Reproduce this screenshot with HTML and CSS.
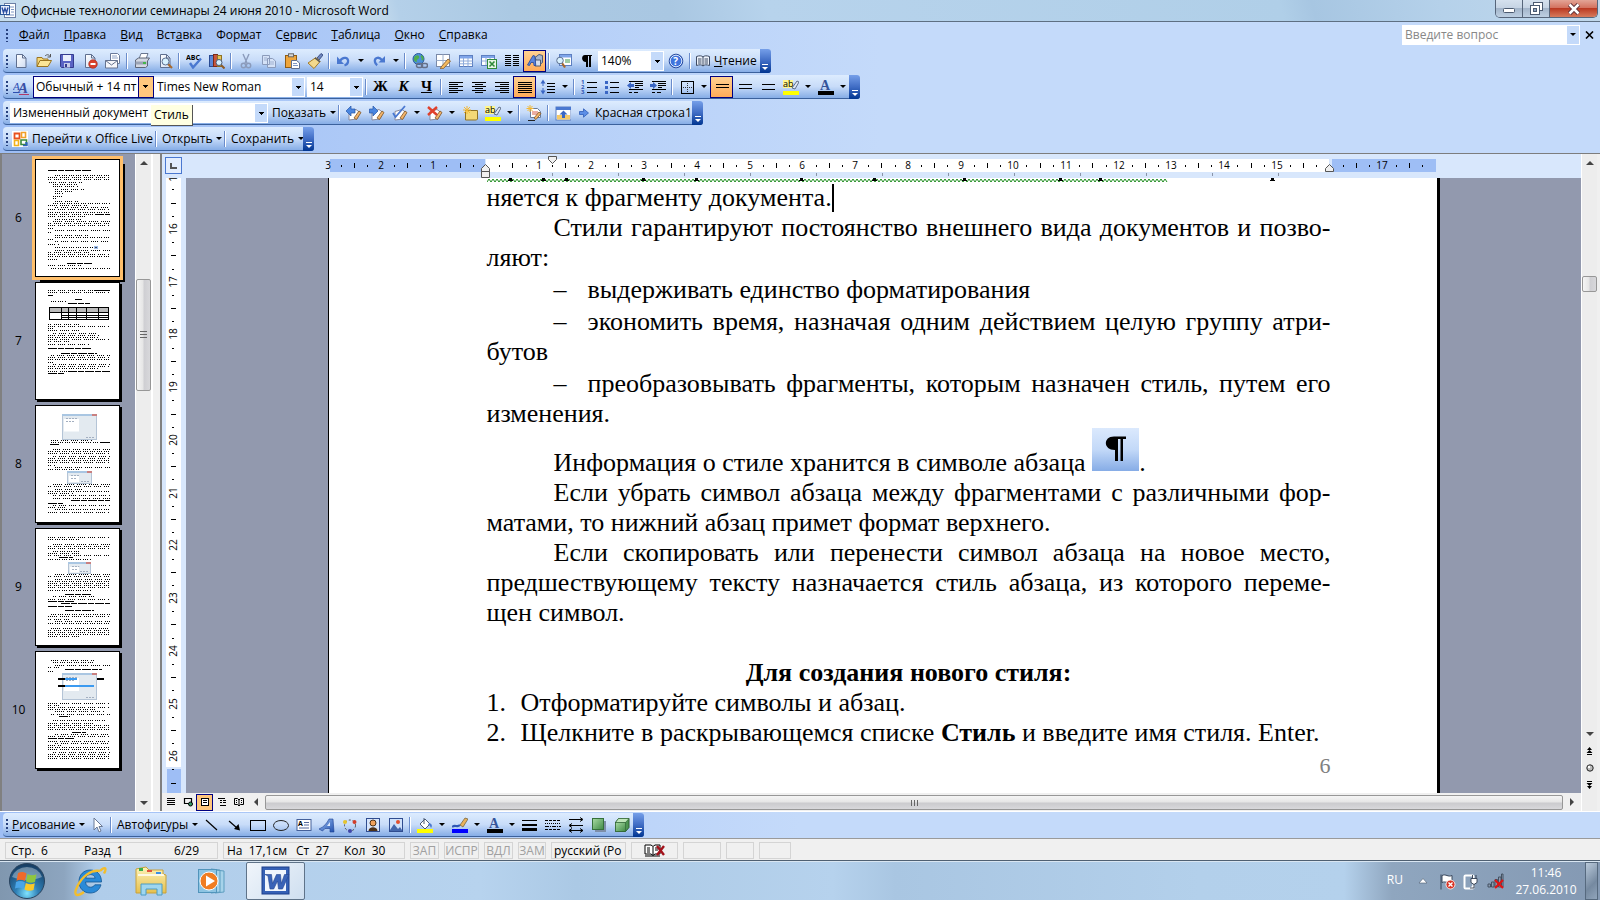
FILE: index.html
```html
<!DOCTYPE html>
<html lang="ru">
<head>
    <meta charset="UTF-8">
    <meta name="viewport" content="width=device-width, initial-scale=1.0">
    <title>Офисные технологии семинары 24 июня 2010 - Microsoft Word</title>
    <link rel="stylesheet" href="styles.css">
</head>
<body>

    <!-- Shared icon pieces -->
    <svg class="defs" aria-hidden="true">
        <defs>
            <linearGradient id="gBlue" x1="0" y1="0" x2="1" y2="1"><stop offset="0" stop-color="#9cc0f4"/><stop offset="1" stop-color="#1f4fae"/></linearGradient>
            <linearGradient id="gPaper" x1="0" y1="0" x2="1" y2="1"><stop offset="0" stop-color="#fff"/><stop offset="1" stop-color="#cfdcf2"/></linearGradient>
            <linearGradient id="gGreen" x1="0" y1="0" x2="1" y2="1"><stop offset="0" stop-color="#a9dba4"/><stop offset="1" stop-color="#3f8a45"/></linearGradient>
            <linearGradient id="gFolder" x1="0" y1="0" x2="0" y2="1"><stop offset="0" stop-color="#fdf3b8"/><stop offset="1" stop-color="#e6c04e"/></linearGradient>
            <radialGradient id="gOrb" cx="50%" cy="85%" r="80%"><stop offset="0" stop-color="#7fe3ff"/><stop offset=".4" stop-color="#2f7fb5"/><stop offset="1" stop-color="#173f66"/></radialGradient>
        </defs>
        <symbol id="page" viewBox="0 0 16 16"><path d="M3.500 1.500h6l3.500 3.500v9.500h-9.500z" fill="url(#gPaper)" stroke="#5f6f8f"/><path d="M9.500 1.500v3.500h3.500" fill="none" stroke="#5f6f8f"/></symbol>
        <symbol id="noteEdit" viewBox="0 0 16 16"><path d="M3 6.500l7-2 4 3-3 6.500-8 1z" fill="#fff" stroke="#8a8a9c"/><path d="M8 13l5-7 2 1.500-4.500 7z" fill="#f3b46b" stroke="#7c5426" stroke-width=".8"/></symbol>
    </svg>

    <div class="window">
        <header class="titlebar">
            <svg width="16" height="16" viewBox="0 0 16 16"><rect x="4.500" y=".5" width="11" height="14" fill="#fff" stroke="#6c7fa5"/><path d="M10 4h4M11 6.500h3M11 9h3M6 12h8" stroke="#7f97c4"/><rect x=".5" y="2.500" width="9" height="9" fill="#e9effc" stroke="#2b579a"/><path d="M2 4.500l1.500 5 1.500-4 1.500 4 1.500-5" fill="none" stroke="#2b4ea2" stroke-width="1.400"/></svg>
            <h1>Офисные технологии семинары 24 июня 2010 - Microsoft Word</h1>
            <div class="window-buttons">
                <button class="wb-min" aria-label="Свернуть"><svg width="14" height="10" viewBox="0 0 14 10"><rect x="1.500" y="4.500" width="11" height="4" rx="1" fill="#fff" stroke="#4b5a70"/></svg></button>
                <button class="wb-max" aria-label="Восстановить"><svg width="13" height="13" viewBox="0 0 13 13"><rect x="3.500" y=".5" width="9" height="8" fill="#fff" stroke="#4b5a70"/><rect x=".5" y="3.500" width="9" height="9" fill="#fff" stroke="#4b5a70"/><rect x="3.500" y="6.500" width="3" height="3" fill="#8fa4bf" stroke="#4b5a70"/></svg></button>
                <button class="wb-close" aria-label="Закрыть"><svg width="14" height="12" viewBox="0 0 14 12"><path d="M2.500 1.500L11.500 10.500M11.500 1.500L2.500 10.500" stroke="#5c3038" stroke-width="4.500"/><path d="M2.500 1.500L11.500 10.500M11.500 1.500L2.500 10.500" stroke="#fff" stroke-width="2.500"/></svg></button>
            </div>
        </header>

        <section class="bars">
            <!-- Menu -->
            <nav class="menu">
                <span class="grip"></span>
                <button><u>Ф</u>айл</button>
                <button><u>П</u>равка</button>
                <button><u>В</u>ид</button>
                <button>Вст<u>а</u>вка</button>
                <button>Фор<u>м</u>ат</button>
                <button>С<u>е</u>рвис</button>
                <button><u>Т</u>аблица</button>
                <button><u>О</u>кно</button>
                <button><u>С</u>правка</button>
                <div class="ask">
                    <input type="text" placeholder="Введите вопрос" aria-label="Введите вопрос">
                    <button class="drop" aria-label="Список вопросов"></button>
                </div>
                <button class="close-doc" aria-label="Закрыть окно"><svg width="9" height="8" viewBox="0 0 9 8"><path d="M1 .5l7 7M8 .5l-7 7" stroke="#000" stroke-width="1.600"/></svg></button>
            </nav>

            <!-- Standard -->
            <div class="toolbar">
                <span class="grip"></span>
                <button class="icon" aria-label="Создать"><svg viewBox="0 0 16 16"><use href="#page"/></svg></button>
                <button class="icon" aria-label="Открыть"><svg viewBox="0 0 16 16"><path d="M1 13.500v-9h5l1 1.500h5v2" fill="#f6d878" stroke="#9a7420"/><path d="M1 13.500l3-6h11.500l-3.500 6z" fill="#fbe596" stroke="#9a7420"/><path d="M9 3c2-2 4-1.500 5 .5M14.500 1v3h-3" fill="none" stroke="#555"/></svg></button>
                <button class="icon" aria-label="Сохранить"><svg viewBox="0 0 16 16"><path d="M1.500 1.500h13v13h-12l-1-1z" fill="#5a63c4" stroke="#343b8f"/><rect x="4" y="2" width="8" height="6" fill="#e9eefc"/><rect x="5" y="10" width="6" height="4.500" fill="#c8cce8"/><rect x="6" y="11" width="2" height="3" fill="#343b8f"/></svg></button>
                <button class="icon" aria-label="Разрешения"><svg viewBox="0 0 16 16"><use href="#page"/><circle cx="11" cy="11" r="4.300" fill="#d9412b" stroke="#a82414" stroke-width=".6"/><rect x="8.500" y="10" width="5" height="2" fill="#fff"/></svg></button>
                <button class="icon" aria-label="Сообщение"><svg viewBox="0 0 16 16"><path d="M5.500.5h7l2 2v8h-9z" fill="#fff" stroke="#6a7a99"/><path d="M7 3h5M7 5h6" stroke="#8fa2c4"/><path d="M.5 7.500h12v7.500h-12z" fill="#f6f6fa" stroke="#66738f"/><path d="M.5 7.500l6 4.500 6-4.500" fill="none" stroke="#66738f"/></svg></button>
                <span class="sep"></span>
                <button class="icon" aria-label="Печать"><svg viewBox="0 0 16 16"><path d="M5 6l2-5.500h7L12 6z" fill="#fff" stroke="#68768f"/><path d="M1.500 7l3-2h11l-2 3v5l-2 1.500h-10z" fill="#d3d8e2" stroke="#5d6577"/><path d="M1.500 8.500h11v3h-11z" fill="#9aa3b5"/><rect x="9" y="9" width="3" height="2" fill="#43b649"/></svg></button>
                <button class="icon" aria-label="Просмотр"><svg viewBox="0 0 16 16"><use href="#page"/><path d="M11 11l4 4" stroke="#a8692c" stroke-width="2.200"/><circle cx="8.500" cy="8.500" r="3.500" fill="#d8f1ff" stroke="#5d6f8f"/></svg></button>
                <span class="sep"></span>
                <button class="icon" aria-label="Орфография"><svg viewBox="0 0 16 16"><text x="0" y="7" font-size="7" font-weight="bold" font-family="Open Sans">ABC</text><path d="M4 10l3 4.500 8-9" fill="none" stroke="#4a78d0" stroke-width="2.400"/></svg></button>
                <button class="icon" aria-label="Справочники"><svg viewBox="0 0 16 16"><rect x=".5" y="2.500" width="4" height="11" fill="#5d86d6" stroke="#294b93"/><rect x="4.500" y="1.500" width="4" height="12" fill="#c9553c" stroke="#7a2a1a"/><rect x="8.500" y="2.500" width="4" height="11" fill="#e6c558" stroke="#8e7222"/><path d="M12 12l3.500 3.500" stroke="#8e5a24" stroke-width="2"/><circle cx="10" cy="9.500" r="3" fill="#d8f1ff" stroke="#4b5a74"/></svg></button>
                <span class="sep"></span>
                <button class="icon" aria-label="Вырезать"><svg viewBox="0 0 16 16"><path d="M5 1l4 9M11 1L7 10" stroke="#8b9bbb" stroke-width="1.400"/><circle cx="5.500" cy="12.500" r="2.200" fill="none" stroke="#8b9bbb" stroke-width="1.400"/><circle cx="10.500" cy="12.500" r="2.200" fill="none" stroke="#8b9bbb" stroke-width="1.400"/></svg></button>
                <button class="icon" aria-label="Копировать"><svg viewBox="0 0 16 16"><path d="M1.500 2.500h7v9h-7zM6.500 5.500h5l3 2.500v6.500h-8z" fill="#d5e2f7" stroke="#8b9bbb"/><path d="M3 5h3M3 7h3M8 9h5M8 11h5" stroke="#9fb0d0"/></svg></button>
                <button class="icon" aria-label="Вставить"><svg viewBox="0 0 16 16"><rect x="1.500" y="2.500" width="11" height="12" fill="#eea53b" stroke="#8f5c14"/><rect x="4.500" y=".8" width="5" height="3" fill="#d8d8d8" stroke="#666"/><path d="M7.500 7.500h5l3 2.500v5.500h-8z" fill="#fff" stroke="#5f6f8f"/><path d="M9 10.500h4M9 12.500h5" stroke="#7f97c4"/></svg></button>
                <button class="icon" aria-label="Формат по образцу"><svg viewBox="0 0 16 16"><path d="M10 5l4-4.500 2 1.500-4 5z" fill="#6f87bf" stroke="#3c5186"/><path d="M1 10l8-5.500 4 4-6 7z" fill="#f3d98c" stroke="#a47b28"/><path d="M8 5l5 4" stroke="#555" stroke-width="1.600"/></svg></button>
                <span class="sep"></span>
                <button class="icon" aria-label="Отменить"><svg viewBox="0 0 16 16"><path d="M4 8c3-5 9-3.500 8 1-.4 2-2 3-3.500 3.500" fill="none" stroke="#4a78d0" stroke-width="2.300"/><path d="M1 3.500V11h7z" fill="#4a78d0"/></svg></button>
                <button class="caret" aria-label="Список отмены"></button>
                <button class="icon" aria-label="Вернуть"><svg viewBox="0 0 16 16"><path d="M11 7C7.500 3 3 5 4 9c.3 1.500 1.200 2.500 2.200 3.200" fill="none" stroke="#4a78d0" stroke-width="2.300"/><path d="M14 3v6.500H7.500z" fill="#4a78d0"/></svg></button>
                <button class="caret" aria-label="Список возврата"></button>
                <span class="sep"></span>
                <button class="icon" aria-label="Гиперссылка"><svg viewBox="0 0 16 16"><circle cx="6.500" cy="6" r="5.500" fill="#4c8fd8" stroke="#275a9c"/><path d="M3 3c3-2 5 0 4 2s-3 1-2 4c-3 0-4-3-2-6z" fill="#4fae4c"/><path d="M9 3c2 1 2 3 1 4" stroke="#4fae4c" stroke-width="2" fill="none"/><rect x="4.500" y="10.500" width="6" height="4" rx="2" fill="none" stroke="#667089" stroke-width="1.500"/><rect x="9.500" y="10.500" width="6" height="4" rx="2" fill="none" stroke="#667089" stroke-width="1.500"/></svg></button>
                <button class="icon" aria-label="Таблицы и границы"><svg viewBox="0 0 16 16"><rect x="1.500" y="1.500" width="13" height="12" fill="#fff" stroke="#7b8aa8"/><path d="M1.500 7.500h13M8 1.500v12" stroke="#9caecb"/><path d="M6 14l7-8 2.500 2-7 7.500-3 .5z" fill="#f4b95e" stroke="#7c5426" stroke-width=".8"/></svg></button>
                <button class="icon" aria-label="Добавить таблицу"><svg viewBox="0 0 16 16"><rect x="1.500" y="2.500" width="13" height="11" fill="#fff" stroke="#5d7fc0"/><rect x="2" y="3" width="12" height="2.500" fill="#7fa5ea"/><path d="M5.500 5v8.500M10 5v8.500M1.500 8h13M1.500 10.800h13" stroke="#8fabda"/></svg></button>
                <button class="icon" aria-label="Лист Excel"><svg viewBox="0 0 16 16"><rect x=".5" y="2.500" width="13" height="10" fill="#fff" stroke="#5d7fc0"/><rect x="1" y="3" width="12" height="2" fill="#7fa5ea"/><path d="M5 5v7M9 5v7M.5 8h13" stroke="#8fabda"/><rect x="6.500" y="6.500" width="9" height="9" fill="#e7f5e5" stroke="#2f8a3a"/><path d="M8.500 8.500l5 5M13.500 8.500l-5 5" stroke="#2f8a3a" stroke-width="1.600"/></svg></button>
                <button class="icon" aria-label="Колонки"><svg viewBox="0 0 16 16"><path d="M1 2.500h6M1 4.500h6M1 6.500h6M1 8.500h6M1 10.500h6M1 12.500h6M9 2.500h6M9 4.500h6M9 6.500h6M9 8.500h6M9 10.500h6M9 12.500h6" stroke="#000"/></svg></button>
                <button class="icon active" aria-label="Рисование"><svg viewBox="0 0 16 16"><path d="M8 4.500l4-3 3.500 1v7l-4 3z" fill="#a9b6cc" stroke="#4d5a75"/><path d="M8 7h5.500v6H8z" fill="#d5deed" stroke="#4d5a75"/><path d="M.5 12L6 2.500l1.800.5 1 9.500H7l-.4-3H4l-1.500 3z" fill="#5b85dc" stroke="#25469a" stroke-width=".8"/></svg></button>
                <span class="sep"></span>
                <button class="icon" aria-label="Схема документа"><svg viewBox="0 0 16 16"><rect x="3.500" y="1.500" width="12" height="11" fill="#fff" stroke="#5d7fc0"/><rect x="4" y="2" width="11" height="2.500" fill="#7fa5ea"/><path d="M9 7h5M9 9h5" stroke="#3f9a4a"/><path d="M6 10l3 4.500" stroke="#a8692c" stroke-width="2.200"/><circle cx="4" cy="7.500" r="3.300" fill="#d8f1ff" stroke="#5d6f8f"/></svg></button>
                <button class="icon" aria-label="Непечатаемые знаки"><svg viewBox="0 0 16 16"><path d="M6 2h7v1h-1v11h-2V3H9v11H7V9C2 9 2 2 6 2z"/></svg></button>
                <div class="combo zoom"><select aria-label="Масштаб"><option>140%</option></select></div>
                <button class="icon" aria-label="Справка"><svg viewBox="0 0 16 16"><circle cx="8" cy="8" r="6.800" fill="#3f74dc" stroke="#24479a"/><circle cx="8" cy="8" r="5.800" fill="none" stroke="#dbe7fd"/><text x="5.300" y="12" font-size="10" font-weight="bold" font-family="Open Sans" fill="#fff">?</text></svg></button>
                <span class="sep"></span>
                <button class="text with-icon"><svg width="14" height="14" viewBox="0 0 14 14"><path d="M.5 2.500c3-1 5-1 6.500.5 1.500-1.500 3.500-1.500 6.500-.5v9c-3-1-5-1-6.500.5-1.500-1.500-3.500-1.500-6.500-.5z" fill="#eef3fb" stroke="#3d4a63"/><path d="M7 3v9M2 5h3.500M2 7h3.500M2 9h3.500M8.500 5H12M8.500 7H12M8.500 9H12" stroke="#3d4a63"/></svg><span><u>Ч</u>тение</span></button>
                <button class="cap" aria-label="Параметры панели"></button>
            </div>

            <!-- Formatting -->
            <div class="toolbar">
                <span class="grip"></span>
                <button class="icon" aria-label="Стили"><svg viewBox="0 0 16 16"><text x="0" y="11" font-size="11" font-style="italic" font-family="Liberation Serif" fill="#2f4fb0">A</text><text x="5" y="14" font-size="15" font-style="italic" font-weight="bold" font-family="Liberation Serif" fill="#3a4fa5">A</text><path d="M0 13.500h6" stroke="#2f4fb0"/><path d="M6 15.500h10" stroke="#b03a6a"/></svg></button>
                <div class="combo style"><select aria-label="Стиль"><option>Обычный + 14 пт</option></select></div>
                <div class="combo font"><select aria-label="Шрифт"><option>Times New Roman</option></select></div>
                <div class="combo size"><select aria-label="Размер"><option>14</option></select></div>
                <span class="sep"></span>
                <button class="icon letter">Ж</button>
                <button class="icon letter italic">К</button>
                <button class="icon letter underline">Ч</button>
                <span class="sep"></span>
                <button class="icon" aria-label="По левому краю"><svg viewBox="0 0 16 16"><path d="M1 3.500h14M1 5.500h9M1 7.500h14M1 9.500h9M1 11.500h14M1 13.500h9" stroke="#000"/></svg></button>
                <button class="icon" aria-label="По центру"><svg viewBox="0 0 16 16"><path d="M1 3.500h14M4 5.500h8M1 7.500h14M4 9.500h8M1 11.500h14M4 13.500h8" stroke="#000"/></svg></button>
                <button class="icon" aria-label="По правому краю"><svg viewBox="0 0 16 16"><path d="M1 3.500h14M6 5.500h9M1 7.500h14M6 9.500h9M1 11.500h14M6 13.500h9" stroke="#000"/></svg></button>
                <button class="icon active" aria-label="По ширине"><svg viewBox="0 0 16 16"><path d="M1 3.500h14M1 5.500h14M1 7.500h14M1 9.500h14M1 11.500h14M1 13.500h14" stroke="#000"/></svg></button>
                <button class="icon" aria-label="Интервал"><svg viewBox="0 0 16 16"><path d="M7 4.500h8M7 7.500h8M7 10.500h8M7 13.500h8" stroke="#000"/><path d="M3 2v12" stroke="#3a66c4" stroke-dasharray="5 2"/><path d="M.5 4.500L3 .5l2.500 4zM.5 11.500L3 15.500l2.500-4z" fill="#3a66c4"/></svg></button>
                <button class="caret" aria-label="Выбор интервала"></button>
                <span class="sep"></span>
                <button class="icon" aria-label="Нумерация"><svg viewBox="0 0 16 16"><path d="M6 3.500h10M6 8.500h10M6 13.500h10" stroke="#000"/><g font-size="6" font-weight="bold" font-family="Open Sans" fill="#2f57b5"><text x="0" y="5">1</text><text x="0" y="10">2</text><text x="0" y="15">3</text></g></svg></button>
                <button class="icon" aria-label="Маркеры"><svg viewBox="0 0 16 16"><path d="M6 3.500h9M6 8.500h9M6 13.500h9" stroke="#000"/><path d="M1 2h3v3H1zM1 7h3v3H1zM1 12h3v3H1z" fill="#3a66c4"/></svg></button>
                <button class="icon" aria-label="Уменьшить отступ"><svg viewBox="0 0 16 16"><path d="M2 2.500h14M8 4.500h8M8 6.500h8M8 8.500h4M2 10.500h14M2 13.500h3M7 13.500h4" stroke="#000"/><path d="M0 6.500l4-3.500v2h3v3H4v2z" fill="#3a66c4"/></svg></button>
                <button class="icon" aria-label="Увеличить отступ"><svg viewBox="0 0 16 16"><path d="M2 2.500h14M8 4.500h8M8 6.500h8M8 8.500h4M2 10.500h14M2 13.500h3M7 13.500h4" stroke="#000"/><path d="M7 6.500L3 3v2H0v3h3v2z" fill="#3a66c4"/></svg></button>
                <span class="sep"></span>
                <button class="icon" aria-label="Граница"><svg viewBox="0 0 16 16"><rect x="2.500" y="2.500" width="12" height="12" fill="none" stroke="#000"/><path d="M8.500 4v10M4 8.500h10" stroke="#333" stroke-dasharray="1 1"/></svg></button>
                <button class="caret" aria-label="Выбор границы"></button>
                <button class="icon active" aria-label="Интервал 1"><svg viewBox="0 0 16 16"><path d="M2 5.500h13M2 8.500h13" stroke="#000"/></svg></button>
                <button class="icon" aria-label="Интервал 1,5"><svg viewBox="0 0 16 16"><path d="M2 5.500h13M2 9.500h13" stroke="#000"/></svg></button>
                <button class="icon" aria-label="Интервал 2"><svg viewBox="0 0 16 16"><path d="M2 5.500h13M2 10.500h13" stroke="#000"/></svg></button>
                <button class="icon" aria-label="Выделение цветом"><svg viewBox="0 0 16 16"><rect x="0" y="1" width="10" height="8" fill="#fff68a"/><text x="0" y="8" font-size="9" font-family="Open Sans">ab</text><path d="M9 9l5-7 2 1-4 7z" fill="#dfe8f5" stroke="#44546e" stroke-width=".8"/><rect y="12" width="16" height="4" fill="#ff0"/></svg></button>
                <button class="caret" aria-label="Цвет выделения"></button>
                <button class="icon" aria-label="Цвет шрифта"><svg viewBox="0 0 16 16"><text x="2" y="11" font-size="14" font-weight="bold" font-family="Liberation Serif" fill="#35549a">A</text><rect y="12" width="16" height="4"/></svg></button>
                <button class="caret" aria-label="Выбор цвета шрифта"></button>
                <button class="cap" aria-label="Параметры панели"></button>
            </div>

            <!-- Reviewing -->
            <div class="toolbar">
                <span class="grip"></span>
                <div class="combo review"><select aria-label="Вид исправлений"><option>Измененный документ</option></select></div>
                <div class="tooltip" role="tooltip">Стиль</div>
                <button class="text drop-text show"><span>По<u>к</u>азать</span></button>
                <span class="sep"></span>
                <button class="icon" aria-label="Предыдущее"><svg viewBox="0 0 16 16"><use href="#noteEdit"/><path d="M0 6l5-5v3h4v4H5v3z" fill="#4a86e0" stroke="#2454a8" stroke-width=".7"/></svg></button>
                <button class="icon" aria-label="Следующее"><svg viewBox="0 0 16 16"><use href="#noteEdit"/><path d="M9 6L4 1v3H.5v4H4v3z" fill="#4a86e0" stroke="#2454a8" stroke-width=".7"/></svg></button>
                <button class="icon" aria-label="Принять"><svg viewBox="0 0 16 16"><use href="#noteEdit"/><path d="M1 8l2.500 4L13 1" fill="none" stroke="#4a78d0" stroke-width="1.800"/></svg></button>
                <button class="caret" aria-label="Варианты принятия"></button>
                <button class="icon" aria-label="Отклонить"><svg viewBox="0 0 16 16"><use href="#noteEdit"/><path d="M1 2l9 8M10 2L1 10" stroke="#e0402b" stroke-width="2.400"/></svg></button>
                <button class="caret" aria-label="Варианты отклонения"></button>
                <button class="icon" aria-label="Примечание"><svg viewBox="0 0 16 16"><path d="M3.500 5.500h12v8.500l-1 1H3.500z" fill="#f3d877" stroke="#8f7226"/><path d="M5 1v8M1 5h8M2 2l6 6M8 2L2 8" stroke="#f5b933"/></svg></button>
                <button class="icon" aria-label="Выделение цветом"><svg viewBox="0 0 16 16"><rect x="0" y="1" width="10" height="8" fill="#fff68a"/><text x="0" y="8" font-size="9" font-family="Open Sans">ab</text><path d="M9 9l5-7 2 1-4 7z" fill="#dfe8f5" stroke="#44546e" stroke-width=".8"/><rect y="12" width="16" height="4" fill="#ff0"/></svg></button>
                <button class="caret" aria-label="Цвет выделения"></button>
                <span class="sep"></span>
                <button class="icon" aria-label="Исправления"><svg viewBox="0 0 16 16"><path d="M4.500 3.500h7l3 3v6h-10z" fill="#fff" stroke="#6a7a99"/><path d="M6 7h6M6 9h6" stroke="#d85a42"/><path d="M8 13l5-6 2 1.500-5 6z" fill="#f3b46b" stroke="#7c5426" stroke-width=".8"/><path d="M4 0v7M.5 3.500h7M1.500 1l5 5M6.500 1l-5 5" stroke="#f5b933"/><path d="M2 15.500h7" stroke="#222"/></svg></button>
                <span class="sep"></span>
                <button class="icon" aria-label="Область проверки"><svg viewBox="0 0 16 16"><rect x="1" y="2" width="15" height="13" fill="#fff" stroke="#5d7fc0"/><rect x="1" y="2" width="15" height="3" fill="#4a78d0"/><rect x="2" y="10" width="13" height="4.500" fill="#f5c968"/><path d="M8.500 5.500l4 4h-2.500V13H7V9.500H4.500z" fill="#3a66c4"/></svg></button>
                <button class="text with-icon red-line"><svg width="10" height="10" viewBox="0 0 10 10"><path d="M.5 3.500h4V.8L9.500 5l-5 4.200V6.500h-4z" fill="#5c8ee6" stroke="#2e5db8" stroke-width=".8"/></svg><span>Красная строка1</span></button>
                <button class="cap" aria-label="Параметры панели"></button>
            </div>

            <!-- Office Live -->
            <div class="toolbar">
                <span class="grip"></span>
                <button class="text with-icon live"><svg width="16" height="16" viewBox="0 0 16 16"><rect width="16" height="16" fill="#fff"/><path d="M2.500 2.500h5v5h-5z" fill="none" stroke="#e8501e" stroke-width="1.800"/><path d="M9.500 1.500h4v5h-4z" fill="none" stroke="#f0a02a" stroke-width="1.600"/><path d="M2.500 9.500h4v5h-4z" fill="none" stroke="#f2b21b" stroke-width="1.600"/><path d="M9 9h5.500v4.500H9z" fill="none" stroke="#3b8a3a" stroke-width="1.600"/><path d="M13 12h2v2.500h-4" fill="none" stroke="#2d62c4" stroke-width="1.400"/></svg><span>Перейти к Office Live</span></button>
                <span class="sep"></span>
                <button class="text drop-text open">Открыть</button>
                <span class="sep"></span>
                <button class="text drop-text save">Сохранить</button>
                <button class="cap" aria-label="Параметры панели"></button>
            </div>
        </section>

        <main class="workspace">
            <!-- Page thumbnails -->
            <aside class="thumbs" id="thumbs"></aside>
            <div class="vscroll thumbs-scroll">
                <button class="up" aria-label="Вверх"></button>
                <span class="track-before"></span>
                <span class="slider grooved"></span>
                <span class="track-after"></span>
                <button class="down" aria-label="Вниз"></button>
            </div>
            <div class="splitter"></div>

            <div class="editor">
                <div class="ruler-row">
                    <button class="tab-kind" aria-label="Табуляция"><svg width="7" height="6" viewBox="0 0 7 6"><path d="M1 0v5h6" fill="none" stroke="#555" stroke-width="2"/></svg></button>
                    <div class="hruler"><svg id="hruler" width="1111" height="24" viewBox="0 0 1111 24"></svg></div>
                </div>

                <div class="editor-body">
                    <div class="vruler"><svg id="vruler" width="24" height="616" viewBox="0 0 24 616"></svg></div>
                    <div class="canvas">
                        <article class="page">
                            <svg class="cut-line" id="cutLine" height="5" aria-hidden="true"></svg>
                            <p class="rest">няется к фрагменту документа.<span class="cursor"></span></p>
                            <p>Стили гарантируют постоянство внешнего вида документов и позво&shy;ляют:</p>
                            <ul>
                                <li>выдерживать единство форматирования</li>
                                <li>экономить время, назначая одним действием целую группу атри&shy;бутов</li>
                                <li>преобразовывать фрагменты, которым назначен стиль, путем его изменения.</li>
                            </ul>
                            <p>Информация о стиле хранится в символе абзаца <span class="pilcrow"><svg width="47" height="43" viewBox="0 0 47 43"><path d="M22 8.500h12v2.500h-3V33h-2.500V11H26v22h-3V22C11 22 11 8.500 22 8.500z"/></svg></span>.</p>
                            <p>Если убрать символ абзаца между фрагментами с различными фор&shy;матами, то нижний абзац примет формат верхнего.</p>
                            <p>Если скопировать или перенести символ абзаца на новое место, предшествующему тексту назначается стиль абзаца, из которого переме&shy;щен&nbsp;символ.</p>
                            <h2>Для создания нового стиля:</h2>
                            <ol>
                                <li>Отформатируйте символы и абзац.</li>
                                <li>Щелкните в раскрывающемся списке <b>Стиль</b> и введите имя стиля. Enter.</li>
                            </ol>
                            <footer>6</footer>
                        </article>
                    </div>
                </div>

                <div class="hscroll">
                    <button class="view" aria-label="Обычный режим"><svg width="12" height="12" viewBox="0 0 12 12"><path d="M2 2.500h8M2 4.500h8M2 6.500h8M2 8.500h8" stroke="#000"/></svg></button>
                    <button class="view" aria-label="Веб-документ"><svg width="12" height="12" viewBox="0 0 12 12"><path d="M2.500 2.500h7v5h-7z" fill="none" stroke="#000" stroke-width="1.200"/><circle cx="8.500" cy="8" r="2" fill="#396" stroke="#000"/></svg></button>
                    <button class="view active" aria-label="Разметка страницы"><svg width="12" height="12" viewBox="0 0 12 12"><rect x="2.500" y="2.500" width="7" height="7" fill="#fff" stroke="#000"/><path d="M4 4.500h4M4 6.500h4" stroke="#000"/></svg></button>
                    <button class="view" aria-label="Структура"><svg width="12" height="12" viewBox="0 0 12 12"><path d="M2 2.500h7M4 4.500h2M7 4.500h3M4 6.500h2M7 6.500h3M4 9.500h6" stroke="#000"/></svg></button>
                    <button class="view" aria-label="Чтение"><svg width="12" height="12" viewBox="0 0 12 12"><path d="M1.500 2.500h3L6 4l1.500-1.500h3v6h-3L6 10 4.500 8.500h-3zM6 4v6M3 4.500h1M3 6.500h1M8 4.500h1M8 6.500h1" fill="none" stroke="#000"/></svg></button>
                    <button class="left" aria-label="Влево"></button>
                    <span class="hslider"></span>
                    <button class="right" aria-label="Вправо"></button>
                </div>
            </div>

            <div class="vscroll page-scroll">
                <button class="up" aria-label="Вверх"></button>
                <span class="track-before"></span>
                <span class="slider"></span>
                <span class="track-after"></span>
                <button class="down" aria-label="Вниз"></button>
                <button class="jump" aria-label="Предыдущая страница"><svg width="7" height="8" viewBox="0 0 7 8"><path d="M3.500 0L6 3H1zM3.500 3L6.500 6H.5zM1 7h5v1H1z"/></svg></button>
                <button class="jump" aria-label="Выбор объекта"><svg width="8" height="8" viewBox="0 0 8 8"><circle cx="4" cy="4" r="3.200" fill="#bbb" stroke="#222"/><circle cx="3" cy="3" r="1.200" fill="#fff"/></svg></button>
                <button class="jump" aria-label="Следующая страница"><svg width="7" height="8" viewBox="0 0 7 8"><path d="M3.500 8L6 5H1zM3.500 5L6.500 2H.5zM1 0h5v1H1z"/></svg></button>
            </div>
        </main>

        <!-- Drawing -->
        <div class="draw-row">
            <div class="toolbar">
                <span class="grip"></span>
                <button class="text drop-text drawing"><span><u>Р</u>исование</span></button>
                <button class="icon" aria-label="Выбор объектов"><svg viewBox="0 0 16 16"><path d="M5 1v12l3-3 2 5 2-1-2-4.500h3.500z" fill="#fff" stroke="#6b7a96"/></svg></button>
                <span class="sep"></span>
                <button class="text drop-text shapes"><span>Автофи<u>г</u>уры</span></button>
                <button class="icon" aria-label="Линия"><svg viewBox="0 0 16 16"><path d="M2 3l11 10" stroke="#000" stroke-width="1.200"/></svg></button>
                <button class="icon" aria-label="Стрелка"><svg viewBox="0 0 16 16"><path d="M2 4l8 7" stroke="#000" stroke-width="1.200"/><path d="M13 13.500L7 12l4.500-5z"/></svg></button>
                <button class="icon" aria-label="Прямоугольник"><svg viewBox="0 0 16 16"><rect x=".5" y="3.500" width="15" height="10" fill="none" stroke="#000"/></svg></button>
                <button class="icon" aria-label="Овал"><svg viewBox="0 0 16 16"><ellipse cx="8" cy="8.500" rx="7.500" ry="5" fill="none" stroke="#222"/></svg></button>
                <button class="icon" aria-label="Надпись"><svg viewBox="0 0 16 16"><rect x="1" y="2.500" width="14" height="11" fill="#fff" stroke="#44609a"/><text x="2" y="9" font-size="7" font-weight="bold" font-family="Open Sans">A</text><path d="M8 5.500h5M8 8h5M3 11h10" stroke="#55699a"/></svg></button>
                <button class="icon" aria-label="WordArt"><svg viewBox="0 0 16 16"><path d="M0 12C5 10 8 6 10 2h4l1 13h-4v-3.500H6L3.500 14z" fill="url(#gBlue)" stroke="#1c3f92" stroke-width=".6"/><path d="M8 9h3V5z" fill="#dce8fb"/></svg></button>
                <button class="icon" aria-label="Диаграмма"><svg viewBox="0 0 16 16"><circle cx="8" cy="8.500" r="5.500" fill="none" stroke="#444" stroke-dasharray="2 2"/><circle cx="3" cy="5" r="2" fill="#e7c52c"/><circle cx="12.500" cy="5" r="2" fill="#d33d2a"/><circle cx="8" cy="14" r="2" fill="#4046a8"/></svg></button>
                <button class="icon" aria-label="Картинка"><svg viewBox="0 0 16 16"><rect x="1.500" y="1.500" width="13" height="13" fill="#d7e5fb" stroke="#2f4c8f"/><circle cx="8" cy="6" r="3" fill="#f1a25c" stroke="#4d3219"/><path d="M3.500 14c0-5 9-5 9 0z" fill="#4d3219"/></svg></button>
                <button class="icon" aria-label="Рисунок"><svg viewBox="0 0 16 16"><rect x="1.500" y="1.500" width="13" height="13" fill="#cfe1fb" stroke="#2f4c8f"/><path d="M2 13l4-6 4 5 2-2 2 3v1H2z" fill="#4568ad"/><circle cx="10" cy="5" r="2" fill="#e3512f"/></svg></button>
                <span class="sep"></span>
                <button class="icon" aria-label="Цвет заливки"><svg viewBox="0 0 16 16"><path d="M3 7l5-5 5 5-5 5z" fill="#fff" stroke="#4d5a75"/><path d="M7 1v6" stroke="#4d5a75"/><path d="M12 6c4 1 3 4 2 5-1-2-1-3-3-3z" fill="#4a78d0"/><rect y="12" width="16" height="4" fill="#ff0"/></svg></button>
                <button class="caret" aria-label="Выбор заливки"></button>
                <button class="icon" aria-label="Цвет линий"><svg viewBox="0 0 16 16"><path d="M0 10c3-3 5 1 8-2" fill="none" stroke="#2f57b5" stroke-width="2"/><path d="M8 8l5-7 3 1-5 8z" fill="#e9b25a" stroke="#6b5a34" stroke-width=".7"/><rect y="12" width="16" height="4" fill="#00f"/></svg></button>
                <button class="caret" aria-label="Выбор цвета линий"></button>
                <button class="icon" aria-label="Цвет шрифта"><svg viewBox="0 0 16 16"><text x="2" y="11" font-size="14" font-weight="bold" font-family="Liberation Serif" fill="#35549a">A</text><rect y="12" width="16" height="4"/></svg></button>
                <button class="caret" aria-label="Выбор цвета шрифта"></button>
                <button class="icon" aria-label="Тип линии"><svg viewBox="0 0 16 16"><path d="M0 3.500h15" stroke="#000"/><path d="M0 8h15" stroke="#000" stroke-width="2"/><path d="M0 12.500h15" stroke="#000" stroke-width="3"/></svg></button>
                <button class="icon" aria-label="Тип штриха"><svg viewBox="0 0 16 16"><path d="M0 3.500h16M0 12.500h16" stroke="#000" stroke-dasharray="3 1"/><path d="M0 6.500h16" stroke="#000" stroke-dasharray="1 1"/><path d="M0 9.500h16" stroke="#000" stroke-dasharray="4 1 1 1"/></svg></button>
                <button class="icon" aria-label="Вид стрелки"><svg viewBox="0 0 16 16"><path d="M1 2.500h13M2 8.500h13M1 13.500h14M12 .5l3 2-3 2M4 6.500L1 8.500l3 2M4 11.500l-3 2 3 2M12 11.500l3 2-3 2" fill="none" stroke="#000"/></svg></button>
                <button class="icon" aria-label="Тень"><svg viewBox="0 0 16 16"><rect x="4" y="4" width="11" height="11" fill="#7d8ea8"/><rect x="1.500" y="1.500" width="11" height="11" fill="url(#gGreen)" stroke="#35703a"/></svg></button>
                <button class="icon" aria-label="Объем"><svg viewBox="0 0 16 16"><path d="M1.500 5.500l3-4h10.500v9l-3.500 4h-10z" fill="#4c9550" stroke="#2c5f31"/><path d="M1.500 5.500l3-4h10.500l-3.500 4z" fill="#bfe6ba" stroke="#2c5f31" stroke-width=".6"/><rect x="1.500" y="5.500" width="10" height="9" fill="url(#gGreen)" stroke="#2c5f31" stroke-width=".6"/></svg></button>
                <button class="cap" aria-label="Параметры панели"></button>
            </div>
        </div>

        <div class="status">
            <div class="cell place"><span>Стр.&nbsp; 6</span><span>Разд&nbsp; 1</span><span>6/29</span></div>
            <div class="cell at"><span>На&nbsp; 17,1см</span><span>Ст&nbsp; 27</span><span>Кол&nbsp; 30</span></div>
            <div class="cell off w29">ЗАП</div>
            <div class="cell off w35">ИСПР</div>
            <div class="cell off w29">ВДЛ</div>
            <div class="cell off w28">ЗАМ</div>
            <div class="cell lang">русский (Ро</div>
            <div class="cell book"><svg width="22" height="14" viewBox="0 0 22 14"><path d="M1 2h6l2 1.500L11 2h5v9h-5L9 12.500 7 11H1z" fill="#fff" stroke="#000"/><path d="M1 13h15M9 4v8M3 5h3M3 7h3M3 9h3M11 5h3M11 7h3" stroke="#000"/><path d="M13 3l7 9M20 3l-7 9" stroke="#a3121b" stroke-width="2.400"/></svg></div>
            <div class="cell w38"></div>
            <div class="cell w28"></div>
            <div class="cell w32"></div>
        </div>
    </div>

    <!-- Windows taskbar -->
    <div class="taskbar">
        <button class="start" aria-label="Пуск"><svg width="38" height="38" viewBox="0 0 38 38"><circle cx="19" cy="19" r="17.500" fill="url(#gOrb)" stroke="#29435e"/><path d="M4 15a15.500 13.500 0 0 1 30 0c-9 4-20 4-30 0z" fill="#fff" opacity=".35"/><path d="M10 11c3-1.500 6-1.500 8.500.5L17 19c-3-1.500-6-1.500-8.500-.3z" fill="#ef6a2b"/><path d="M19.500 12c3 1.500 6 1.500 9 .3L27 20c-3 1.200-6 1-9-.5z" fill="#8fc63f"/><path d="M8 20c3-1.500 6-1 8.800.3L15.500 27c-3-1.500-6-1.500-8.500-.4z" fill="#4aa5e8"/><path d="M17.800 21c3 1.500 6 1.500 9 .3L25.500 28c-3 1.200-6 1-9-.4z" fill="#fbc928"/></svg></button>
        <button class="task" aria-label="Internet Explorer"><svg width="34" height="32" viewBox="0 0 34 32"><path d="M28.500 17H12.500c.3 3.600 2.600 5.200 5 5.200 2 0 3.500-1 4.300-2.400h6.200C26.500 25 22.500 28 17.300 28 10.500 28 6 23.300 6 16.500S10.800 5 17.300 5s11.200 4.500 11.200 12zm-15.800-3.800h9.400c-.4-2.300-2.200-3.600-4.600-3.600s-4.300 1.300-4.800 3.600z" fill="#2a8ad8" stroke="#125692" stroke-width=".8"/><path d="M27 6c5-5 7-3 4 2.500M27 6C18 4 9 12 4.500 21-.5 31 4 32 11 27" fill="none" stroke="#f3bd2c" stroke-width="2.400"/></svg></button>
        <button class="task" aria-label="Проводник"><svg width="34" height="32" viewBox="0 0 34 32"><path d="M2 4l10-2 3 3h14v4l3 1v18H2z" fill="url(#gFolder)" stroke="#c9a13b"/><path d="M5 3h4v3H5z" fill="#3bb04a"/><path d="M13 5h5v2h-5z" fill="#e2553d"/><path d="M22 7h5v2h-5z" fill="#3b8fe2"/><path d="M4 10h26" stroke="#fff" stroke-width="1.500"/><path d="M7 30V19h21v11h-5v-6H12v6z" fill="#9fd6ef" stroke="#4c9cc4"/></svg></button>
        <button class="task" aria-label="Медиаплеер"><svg width="34" height="32" viewBox="0 0 34 32"><path d="M20 5l9 1v21l-9 1zM16 4l9 1v22l-9 1z" fill="#a6d3ea" stroke="#5d9dc0"/><rect x="3.500" y="4.500" width="18" height="23" fill="#8dc4e2" stroke="#5194bb"/><circle cx="14" cy="16" r="9" fill="#f07d22" stroke="#fff"/><path d="M11 10.500l9 5.500-9 5.500z" fill="#fff"/></svg></button>
        <button class="task current" aria-label="Microsoft Word"><svg width="30" height="30" viewBox="0 0 30 30"><rect x="1" y="1" width="27" height="27" fill="#3560b5" stroke="#1c3f8c"/><rect x="4" y="4" width="21" height="21" fill="#f0f5fd"/><path d="M4 8.500h6.500l1 9 4-9h4l.8 9 3.200-9H28L21.500 23h-4l-1-8-3.800 8H9L7 10z" fill="#3a63b8" stroke="#24458f" stroke-width=".6"/></svg></button>
        <div class="tray">
            <span class="lang-code">RU</span>
            <button aria-label="Скрытые значки"><svg width="10" height="6" viewBox="0 0 10 6"><path d="M5 .5L9 5H1z" fill="#fff" stroke="#4b5a70" stroke-width=".6"/></svg></button>
            <button aria-label="Центр поддержки"><svg width="17" height="17" viewBox="0 0 17 17"><path d="M2 1.500v15M3 2.500c4-2 6 2 10 0v7c-4 2-6-2-10 0z" fill="#fff" stroke="#39465a"/><circle cx="11.500" cy="11.500" r="4.500" fill="#d93526" stroke="#fff" stroke-width=".8"/><path d="M9.500 9.500l4 4M13.500 9.500l-4 4" stroke="#fff" stroke-width="1.400"/></svg></button>
            <button aria-label="Питание"><svg width="16" height="17" viewBox="0 0 16 17"><rect x="1.500" y="2.500" width="9" height="13" rx="1" fill="none" stroke="#fff" stroke-width="2"/><path d="M8 5.500h6v4l-3 2-3-2zM9.500 2v3.500M13 2v3.500M11 11v4H7" fill="#fff" stroke="#2f3b4d" stroke-width=".9"/></svg></button>
            <button aria-label="Сеть"><svg width="17" height="16" viewBox="0 0 17 16"><path d="M1 11h2.500v3H1zM4.500 9H7v5H4.500zM8 6.500h2.500V14H8zM11.500 4H14v10h-2.500zM14.500 1H16v13h-1.500z" fill="#8d9db2" stroke="#3d4959" stroke-width=".9"/><path d="M8 7l8 8M16 7l-8 8" stroke="#e01414" stroke-width="2.200"/></svg></button>
            <div class="clock"><time>11:46</time><time>27.06.2010</time></div>
            <button class="show-desktop" aria-label="Свернуть все окна"></button>
        </div>
    </div>

    <script>
        const CM = 52.73;

        // Horizontal ruler: zero is at the left text margin
        const zero = 158;
        let h = `<rect x="2" y="5" width="155" height="13" fill="#9ebef5"/>
            <rect x="158" y="5" width="843" height="13" fill="#fff"/>
            <rect x="1004" y="5" width="104" height="13" fill="#9ebef5"/>`;
        for (let q = -12; q <= 71; q++) {
            const x = Math.round(zero + q * CM / 4);
            if (q === 0 || q === 64) continue;
            if (q % 4 === 0) {
                h += `<text x="${x}" y="15">${Math.abs(q / 4)}</text>`;
            } else if (q % 2 === 0) {
                h += `<rect x="${x}" y="9" width="1" height="5"/>`;
            } else {
                h += `<rect x="${x}" y="11" width="1" height="2"/>`;
            }
        }
        for (let i = 1; i <= 12; i++) {
            h += `<rect x="${zero + i * 66}" y="19" width="1" height="3" fill="#8a94a8"/>`;
        }
        h += `<g fill="#f0f0f0" stroke="#555">
            <path d="M220.500 2.500h8v3l-4 4-4-4z"/>
            <path d="M153.500 17.500v-3l4-4 4 4v3zM153.500 17.500h8v6h-8z"/>
            <path d="M997.500 17.500v-3l4-4 4 4v3z"/></g>`;
        document.getElementById("hruler").innerHTML = h;

        // Vertical ruler, numbers turned to read upwards
        let v = `<rect x="4" width="15" height="589" fill="#fff"/>
            <rect x="5" y="591" width="14" height="25" fill="#9ebef5"/>`;
        for (let q = 60; q <= 107; q++) {
            const y = Math.round(51 + (q - 64) * CM / 4);
            if (q % 4 === 0) {
                v += `<text transform="translate(15 ${y}) rotate(-90)">${q / 4}</text>`;
            } else if (q % 2 === 0) {
                v += `<rect x="9" y="${y}" width="5" height="1"/>`;
            } else {
                v += `<rect x="10" y="${y}" width="2" height="1"/>`;
            }
        }
        document.getElementById("vruler").innerHTML = v;

        // Bottom edge of the line scrolled under the ruler, with the grammar wave
        let wave = "M0 4";
        for (let x = 2; x <= 680; x += 2) {
            wave += `L${x} ${x % 4 ? 1 : 4}`;
        }
        let cut = `<path d="${wave}" fill="none" stroke="#1a8a1a"/>`;
        [22, 55, 78, 155, 208, 313, 386, 476, 572, 612, 784].forEach(x => {
            cut += `<rect x="${x}" width="3" height="2"/><rect x="${x - 1}" y="2" width="5" height="1"/>`;
        });
        document.getElementById("cutLine").innerHTML = cut;

        // Thumbnails: each row is [y, left, right, bold]
        const T = 1;
        const thumbs = [
            { n: 6, rows: [[11,13,57,T],[16,20,75],[18,13,75],[20,13,75],[23,14,47],[25,18,43],[27,18,43],[30,20,50],[32,20,38],[34,20,28],[37,18,29],[39,18,24],[42,20,44],[44,18,75],[46,13,52],[48,20,75],[50,13,75],[53,13,75],[55,13,60],[55,60,75,T],[57,13,50],[60,20,48],[62,18,75],[64,13,75],[66,13,75],[69,13,20],[71,20,75],[73,13,18],[76,20,54],[78,20,75],[80,13,18],[82,20,75],[85,13,24],[88,20,60],[91,20,75],[93,13,54],[95,13,75],[97,13,75],[100,13,24],[104,32,57,T],[106,13,46],[109,16,75]],
              mark: true },
            { n: 7, rows: [[8,13,75],[8,60,75,T],[10,13,75],[13,13,18,T],[17,40,47,T],[19,16,31],[21,33,55,T],[42,13,44],[44,13,75],[46,13,18],[48,13,44],[51,18,64],[53,13,64],[55,13,64],[57,13,75],[59,13,34],[62,13,54],[66,13,57,T],[71,26,62,T],[73,16,75],[75,13,75],[77,13,75],[80,13,18],[82,18,75],[84,13,75],[86,13,64],[89,13,33],[89,33,75,T],[91,13,30,T]],
              table: true },
            { n: 8, rows: [[35,16,57],[37,16,75],[37,66,75,T],[39,15,24,T],[44,18,75],[46,13,75],[48,13,75],[51,18,75],[53,13,75],[55,13,75],[57,13,75],[60,13,20],[62,20,75],[64,13,44],[79,18,75],[81,13,75],[84,20,48],[86,13,75],[88,13,38],[90,18,75],[93,18,75],[95,36,75,T],[98,13,28,T],[100,18,75],[102,13,32],[104,20,75],[107,13,75]],
              pics: [[27,9,34,25],[32,66,24,12]] },
            { n: 9, rows: [[9,13,75],[11,13,44],[16,18,75],[18,13,75],[20,13,75],[23,18,44],[25,13,44],[27,13,75],[29,24,38,T],[31,13,57],[46,20,75],[48,13,75],[51,20,75],[53,13,75],[55,13,75],[57,13,75],[59,13,75],[62,13,57],[66,30,57,T],[68,18,60],[71,13,75],[73,13,40,T],[75,26,75,T],[78,13,37,T],[82,30,59,T],[86,16,75],[88,13,75],[91,13,34],[93,20,75],[95,13,75],[100,16,75],[102,13,75],[104,13,75],[106,13,75],[108,13,44]],
              pics: [[33,34,22,11]] },
            { n: 10, rows: [[9,16,60],[11,18,60],[14,20,75],[16,13,24],[18,30,67,T],[20,13,18],[52,13,75],[54,13,24],[56,13,75],[58,13,60],[60,20,70],[63,16,75],[65,24,35,T],[69,18,70],[72,13,60],[74,13,75],[76,13,75],[78,13,75],[81,37,51,T],[83,20,75],[85,13,75],[87,13,40,T],[90,13,75],[92,20,75],[94,13,26],[96,13,75],[98,13,75],[101,18,75],[103,13,75],[105,13,75],[107,13,75]],
              pics: [[27,22,34,26]] }
        ];
        const gaps = ["1 1 1 1 1 1 1 3", "1 1 1 1 1 2", "1 1 1 1 1 1 1 1 1 3", "1 1 1 3 1 1 1 1"];

        thumbs.forEach(t => {
            let s = "";
            t.rows.forEach(([y, a, b, bold], i) => {
                const dash = bold ? "9 1 6 1" : gaps[i % 4];
                s += `<path d="M${a} ${y}.5H${b}" stroke="#000" stroke-dasharray="${dash}"/>`;
            });
            (t.pics || []).forEach(([x, y, w, hh]) => {
                s += `<rect x="${x}.5" y="${y}.5" width="${w}" height="${hh}" fill="#e3eaf0" stroke="#b4c4d6"/>
                    <rect x="${x}" y="${y}" width="${w}" height="2" fill="#a9c6e2"/>
                    <rect x="${x + w - 4}" y="${y}" width="5" height="2" fill="#c98080"/>
                    <rect x="${x + 2}" y="${y + 5}" width="${w / 2 - 2}" height="${hh / 2}" fill="#fff"/>
                    <path d="M${x + 4} ${y + 4}.5h${w / 3}M${x + 4} ${y + 7}.5h${w / 4}M${x + w - 10} ${y + hh - 2}.5h8" stroke="#a3afc0" stroke-dasharray="2 1"/>`;
            });
            if (t.mark) {
                s += `<rect x="59" y="87" width="4" height="3" fill="#9dbcec"/><rect x="60" y="88" width="2" height="1" fill="#345"/>`;
            }
            if (t.table) {
                s += `<rect x="14.500" y="25.500" width="59" height="12" fill="#fff" stroke="#000"/>
                    <rect x="15" y="26" width="58" height="4" fill="#bbb"/>
                    <path d="M14 30.500h60M26 33.500h48M26 35.500h48M26.500 26v12M33.500 26v12M41.500 26v12M51.500 26v12M63.500 26v12" stroke="#000"/>`;
            }
            if (t.n === 10) {
                s += `<path d="M23 28h7M23 35h7M62 28h7" stroke="#000" stroke-width="2"/><path d="M30 28h12M30 35h29" stroke="#3b9af0" stroke-width="2"/>`;
            }
            document.getElementById("thumbs").innerHTML +=
                `<a href="#" class="thumb${t.n === 6 ? " selected" : ""}"><span>${t.n}</span>
                <svg width="81" height="114" viewBox="2 2 81 114">${s}</svg></a>`;
        });
    </script>

</body>
</html>
```
FILE: styles.css
```css
* {
    box-sizing: border-box;
}

body {
    margin: 0;
    height: 100vh;
    display: flex;
    flex-direction: column;
    overflow: hidden;
    font-family: "Open Sans", "Noto Sans", sans-serif;
    font-size: 12px;
    color: #000;
    background: #b3d0ec;
}

button {
    font: inherit;
    color: inherit;
    border: none;
    background: none;
    padding: 0;
    margin: 0;
}

.defs {
    position: absolute;
    width: 0;
    height: 0;
}

.window {
    flex: 1;
    min-height: 0;
    display: flex;
    flex-direction: column;
}

/* Title bar */
.titlebar {
    height: 22px;
    display: flex;
    align-items: center;
    padding-right: 2px;
    border-bottom: 1px solid #5e6f82;
    background: linear-gradient(75deg, #c5dcee 0, #c0d8ec 24%, #b4d0e9 25%, #abc9e3 32%, #a9c7e2 42%, #b7d3ec 48%, #b0cfe8 80%, #a7c6e2 82%, #b5d1ea 90%, #c1d8ec 100%);
}

.titlebar h1 {
    margin: 0 0 0 5px;
    flex: 1;
    font-size: 12px;
    line-height: 20px;
    font-weight: normal;
}

.window-buttons {
    display: flex;
    align-self: flex-start;
    border: 1px solid #56657a;
    border-top: none;
    border-radius: 0 0 5px 5px;
    overflow: hidden;
}

.window-buttons button {
    height: 17px;
    width: 27px;
    display: flex;
    align-items: center;
    justify-content: center;
    border-right: 1px solid #56657a;
    background: linear-gradient(#d5e1ee 0, #c5d3e3 48%, #a3b5ca 50%, #bdcfe2 100%);
}

.window-buttons .wb-close {
    width: 47px;
    border-right: none;
    background: linear-gradient(#e3a596 0, #d3705c 48%, #bb3a22 50%, #d77a5c 100%);
}

/* Menu and toolbars */
.bars {
    border-bottom: 1px solid #7d7d7d;
    background: linear-gradient(90deg, #9ebef5 0, #c4dafa 55%);
}

.menu {
    height: 27px;
    display: flex;
    align-items: center;
    padding: 0 2px 2px 3px;
}

.menu > button {
    padding: 0 7px;
    height: 22px;
}

.grip {
    width: 9px;
    height: 14px;
    flex: none;
    background: radial-gradient(circle at 2px 2px, #27417f 1px, transparent 1px) 2px 0 / 6px 4px repeat-y;
}

.ask {
    margin-left: auto;
    display: flex;
    width: 178px;
    height: 20px;
    padding: 1px;
    background: #fff;
}

.ask input {
    flex: 1;
    min-width: 0;
    border: none;
    padding: 0 2px;
    font: inherit;
    background: none;
}

.ask input::placeholder {
    color: #888;
}

.menu .close-doc {
    padding: 0;
    width: 18px;
}

.drop,
.caret {
    width: 12px;
    height: 18px;
    flex: none;
    display: flex;
    align-items: center;
    justify-content: center;
}

.drop {
    background: #c4dafa;
}

.drop::after,
.caret::after,
.drop-text::after {
    content: "";
    border: 3px solid transparent;
    border-top-color: #000;
    border-bottom: none;
}

.toolbar {
    width: max-content;
    height: 24px;
    margin: 0 0 2px 3px;
    display: flex;
    align-items: center;
    position: relative;
    border-bottom: 1px solid #3b619c;
    border-radius: 4px 3px 3px 4px;
    background: linear-gradient(#ddecfe 0, #c8dcf9 50%, #86ade6 100%);
}

.toolbar .grip {
    width: 6px;
}

.icon {
    width: 23px;
    height: 22px;
    flex: none;
    display: flex;
    align-items: center;
    justify-content: center;
}

.icon svg {
    width: 16px;
    height: 16px;
}

.icon.active {
    border: 1px solid #000080;
    background: linear-gradient(#ffd192, #ffab58);
}

.letter {
    font-family: "Liberation Serif", serif;
    font-size: 15px;
    font-weight: bold;
}

.italic {
    font-style: italic;
}

.underline {
    text-decoration: underline;
}

.sep {
    width: 1px;
    height: 16px;
    margin: 0 3px 0 2px;
    background: #6a8ccb;
    box-shadow: 1px 0 0 #fff;
}

.text {
    height: 22px;
    padding: 0 3px;
    white-space: nowrap;
}

.with-icon,
.drop-text {
    display: flex;
    align-items: center;
    gap: 4px;
}

.with-icon svg {
    flex: none;
}

.cap {
    width: 11px;
    height: 24px;
    align-self: flex-start;
    padding-bottom: 3px;
    display: flex;
    flex-direction: column;
    align-items: center;
    justify-content: flex-end;
    gap: 2px;
    border-radius: 0 3px 3px 0;
    background: linear-gradient(#759fe9 0, #3f6cc4 50%, #003591 100%);
}

.cap::before {
    content: "";
    width: 6px;
    height: 1px;
    background: #fff;
}

.cap::after {
    content: "";
    border: 3px solid transparent;
    border-top-color: #fff;
    border-bottom: none;
}

.combo {
    height: 20px;
    flex: none;
    display: flex;
    position: relative;
    background: #fff;
    border: 1px solid #fff;
}

.combo select {
    appearance: none;
    width: 100%;
    border: none;
    padding: 0 0 1px 2px;
    font: inherit;
    color: #000;
    background: none;
}

/* arrow part drawn over the right edge of the select */
.combo::after {
    content: "";
    position: absolute;
    right: 0;
    top: 0;
    width: 12px;
    height: 18px;
    pointer-events: none;
    background: linear-gradient(#000, #000) 4px 8px / 5px 1px no-repeat,
        linear-gradient(#000, #000) 5px 9px / 3px 1px no-repeat,
        linear-gradient(#000, #000) 6px 10px / 1px 1px no-repeat,
        #c4dafa;
}

.zoom {
    width: 66px;
}

.combo.style {
    width: 121px;
    height: 22px;
    border-color: #000080;
    margin-left: 1px;
}

.combo.style::after {
    width: 14px;
    height: 20px;
    border-left: 1px solid #000080;
    background-color: #ffc77d;
}

.font {
    width: 151px;
}

.size {
    width: 56px;
    margin-left: 2px;
}

.review {
    width: 258px;
    margin-left: 1px;
}

.tooltip {
    position: absolute;
    left: 148px;
    top: 4px;
    z-index: 2;
    height: 21px;
    padding: 0 3px;
    line-height: 20px;
    background: #ffffe1;
    border-right: 1px solid #555;
    border-bottom: 1px solid #555;
}

.show {
    width: 68px;
    padding-left: 4px;
}

.red-line {
    margin-left: 2px;
    gap: 6px;
    width: 116px;
}

.live {
    width: 144px;
}

.open {
    width: 63px;
}

.save {
    width: 75px;
}

.text.drawing {
    width: 76px;
}

.shapes {
    width: 86px;
}

/* Work area */
.workspace {
    flex: 1;
    min-height: 0;
    display: flex;
    border: solid #808080;
    border-width: 0 3px 0 2px;
    border-right-color: #f0f0f0;
    background: #f0f0f0;
}

.thumbs {
    width: 133px;
    overflow: hidden;
    padding-top: 4px;
    background: #9299ae;
}

.thumb {
    height: 119px;
    margin-bottom: 4px;
    display: flex;
    align-items: center;
    color: #000;
    text-decoration: none;
}

.thumb span {
    width: 33px;
    text-align: center;
}

.thumb svg {
    box-sizing: content-box;
    border: 1px solid #000;
    padding: 1px;
    background: #fff;
    box-shadow: 2px 2px 0 #000;
}

.thumb.selected svg {
    box-shadow: 0 0 0 3px #ffbf6b, 5px 5px 0 #000;
}

.vscroll {
    width: 16px;
    display: flex;
    flex-direction: column;
    align-items: center;
    border-left: 1px solid #fff;
    background: #ededed;
}

.vscroll button {
    width: 15px;
    height: 17px;
    flex: none;
    display: flex;
    align-items: center;
    justify-content: center;
}

.vscroll .up::after {
    content: "";
    border: 4px solid transparent;
    border-bottom-color: #444;
    border-top: none;
}

.vscroll .down::after {
    content: "";
    border: 4px solid transparent;
    border-top-color: #444;
    border-bottom: none;
}

.slider {
    width: 15px;
    height: 16px;
    flex: none;
    border: 1px solid #979797;
    border-radius: 2px;
    background: linear-gradient(90deg, #f5f5f5 0, #e6e6e6 45%, #cfcfd3 55%, #d8d8db 100%);
}

.grooved {
    height: 112px;
    background: linear-gradient(#666, #666) center 51px / 7px 1px no-repeat,
        linear-gradient(#666, #666) center 54px / 7px 1px no-repeat,
        linear-gradient(#666, #666) center 57px / 7px 1px no-repeat,
        linear-gradient(90deg, #f5f5f5 0, #e6e6e6 45%, #cfcfd3 55%, #d8d8db 100%);
}

.thumbs-scroll .track-before {
    flex: 108;
}

.thumbs-scroll .track-after {
    flex: 402;
}

.page-scroll .track-before {
    flex: 105;
}

.page-scroll .track-after {
    flex: 435;
}

.page-scroll {
    padding-bottom: 18px;
}

.splitter {
    width: 11px;
    border: solid #808080;
    border-width: 0 2px 0 0;
    background: linear-gradient(90deg, #fff 2px, #f0f0f0 2px);
}

.editor {
    flex: 1;
    min-width: 0;
    display: flex;
    flex-direction: column;
}

.ruler-row {
    height: 24px;
    display: flex;
    background: #d8e7fc;
}

.tab-kind {
    width: 17px;
    height: 17px;
    margin: 3px 4px 0 3px;
    display: flex;
    align-items: center;
    justify-content: center;
    border: 1px solid #4a78d0;
    background: #e3edfd;
}

.hruler {
    flex: 1;
    display: flex;
    justify-content: center;
    overflow: hidden;
}

.hruler svg,
.vruler svg {
    flex: none;
    display: block;
    overflow: visible;
}

.hruler text,
.vruler text {
    font-size: 10px;
    text-anchor: middle;
}

.editor-body {
    flex: 1;
    min-height: 0;
    display: flex;
}

.vruler {
    width: 24px;
    overflow: hidden;
    background: #d8e7fc;
}

.canvas {
    flex: 1;
    overflow: hidden;
    display: flex;
    justify-content: center;
    background: #9299ae;
}

/* Document page */
.page {
    flex: none;
    width: 1112px;
    padding: 0 106px 0 158px;
    border: solid #000;
    border-width: 0 3px 0 1px;
    background: #fff;
    font-family: "Liberation Serif", "Times New Roman", serif;
    font-size: 26px;
    line-height: 30px;
}

.cut-line {
    display: block;
    width: 100%;
}

.page p {
    margin: 0;
    text-indent: 67px;
    text-align: justify;
}

.page .rest {
    text-indent: 0;
}

.cursor {
    display: inline-block;
    width: 2px;
    height: 28px;
    vertical-align: -6px;
    margin-top: -6px;
    background: #000;
}

.page ul,
.page ol {
    margin: 0;
    padding: 0;
    list-style: none;
}

.page ul li {
    margin-top: 2px;
    text-indent: 67px;
    text-align: justify;
}

.page ul li::before {
    content: "–";
    display: inline-block;
    width: 34px;
    text-indent: 0;
}

.pilcrow {
    display: inline-block;
    width: 47px;
    height: 43px;
    margin-top: -1px;
    text-indent: 0;
    background: linear-gradient(#dbe9fd 0, #c3d9f8 50%, #86ace6 100%);
}

.pilcrow svg {
    display: block;
}

.page h2 {
    margin: 30px 0 0;
    font-size: 26px;
    line-height: 30px;
    text-align: center;
}

.page ol {
    counter-reset: step;
}

.page ol li {
    counter-increment: step;
    white-space: nowrap;
}

.page ol li::before {
    content: counter(step) ".";
    display: inline-block;
    width: 34px;
}

.page footer {
    margin-top: 3px;
    text-align: right;
    font-size: 22px;
    color: #808080;
}

.hscroll {
    height: 18px;
    display: flex;
    align-items: center;
    background: #f0f0f0;
}

.view {
    width: 17px;
    height: 17px;
    flex: none;
    display: flex;
    align-items: center;
    justify-content: center;
}

.view.active {
    border: 1px solid #000080;
    background: #ffc77d;
}

.hscroll .left,
.hscroll .right {
    width: 18px;
    height: 17px;
    flex: none;
    display: flex;
    align-items: center;
    justify-content: center;
}

.hscroll .left::after {
    content: "";
    border: 4px solid transparent;
    border-right-color: #444;
    border-left: none;
}

.hscroll .right::after {
    content: "";
    border: 4px solid transparent;
    border-left-color: #444;
    border-right: none;
}

.hslider {
    flex: 1;
    height: 15px;
    border: 1px solid #979797;
    border-radius: 2px;
    background: linear-gradient(#666, #666) calc(50% - 3px) 4px / 1px 6px no-repeat,
        linear-gradient(#666, #666) 50% 4px / 1px 6px no-repeat,
        linear-gradient(#666, #666) calc(50% + 3px) 4px / 1px 6px no-repeat,
        linear-gradient(#f5f5f5 0, #e6e6e6 45%, #cbcbce 55%, #d8d8db 100%);
}

/* Drawing toolbar */
.draw-row {
    height: 28px;
    padding-top: 1px;
    border-top: 1px solid #fff;
    border-bottom: 1px solid #9a9a9a;
    background: linear-gradient(90deg, #9ebef5 0, #c4dafa 50%);
}

/* Status bar */
.status {
    height: 22px;
    display: flex;
    gap: 5px;
    padding: 3px 5px 1px;
    font-size: 12px;
    line-height: 16px;
    border-bottom: 1px solid #4f6072;
    background: #f0f0f0;
}

.cell {
    border: 1px solid #d4d4d4;
    padding: 0 2px;
    white-space: nowrap;
    overflow: hidden;
}

.place {
    width: 213px;
    display: grid;
    grid-template-columns: 73px 1fr auto;
    padding: 0 18px 0 5px;
}

.at {
    width: 182px;
    display: grid;
    grid-template-columns: 69px 48px 1fr;
    padding: 0 3px;
}

.off {
    padding: 0;
    color: #a0a0a0;
    text-align: center;
}

.w28 {
    width: 28px;
}

.w29 {
    width: 29px;
}

.w32 {
    width: 32px;
}

.w35 {
    width: 35px;
}

.w38 {
    width: 38px;
}

.lang {
    width: 75px;
}

.book {
    width: 47px;
    display: flex;
    justify-content: center;
}

/* Taskbar */
.taskbar {
    height: 39px;
    display: flex;
    align-items: center;
    padding: 0 2px 0 8px;
    border-top: 1px solid #d9e6f2;
    background: linear-gradient(90deg, #8097af 0, #8da5bf 4%, #b0cdea 6%, #b7d3ee 30%, #abc9e5 36%, #b6d2ed 52%, #a9c6e2 56%, #b3d0eb 75%, #b4d1ec 84%, #8fa6bf 87%, #8499b3 100%);
}

.start {
    width: 52px;
    height: 38px;
}

.start svg,
.task svg {
    display: block;
}

.task {
    width: 59px;
    height: 38px;
    margin-right: 2px;
    display: flex;
    align-items: center;
    justify-content: center;
}

.task.current {
    margin-left: 3px;
    border: 1px solid #5f7389;
    border-radius: 2px;
    background: linear-gradient(135deg, #f0f5fb, #cfdff0);
}

.tray {
    margin-left: auto;
    display: flex;
    align-items: center;
    color: #fff;
}

.tray button {
    height: 24px;
    width: 24px;
    display: flex;
    align-items: center;
    justify-content: center;
}

.lang-code {
    margin: 0 8px 4px 0;
}

.clock {
    width: 78px;
    display: flex;
    flex-direction: column;
    text-align: center;
    line-height: 17px;
}

.tray .show-desktop {
    width: 13px;
    height: 38px;
    border: 1px solid #56697e;
    background: linear-gradient(135deg, #b9c9da, #7589a0 60%, #91a5bb);
}
```
